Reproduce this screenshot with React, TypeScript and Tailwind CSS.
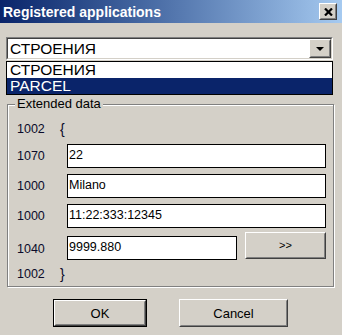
import type { ReactNode } from 'react';

function Raised({ className, children }: { className: string; children?: ReactNode }) {
  return (
    <div
      className={`border border-t-white border-l-white border-r-[#404040] border-b-[#404040] bg-[#d4d0c8] ${className}`}
    >
      <div className="flex h-full w-full items-center justify-center border border-t-[#d4d0c8] border-l-[#d4d0c8] border-r-[#808080] border-b-[#808080]">
        {children}
      </div>
    </div>
  );
}

function Field({ value, className }: { value: string; className: string }) {
  return (
    <div
      className={`flex h-[24px] items-center border border-black bg-white pl-[1px] pb-[2px] text-[12.5px] leading-none ${className}`}
    >
      {value}
    </div>
  );
}

function Label({ code, className = 'w-[50px]' }: { code: string; className?: string }) {
  return <span className={`shrink-0 text-[12.5px] leading-none text-[#0b0b2a] ${className}`}>{code}</span>;
}

export default function App() {
  return (
    <div className="relative h-[335px] w-[342px] overflow-hidden bg-[#d4d0c8] font-['Liberation_Sans',Arial,sans-serif] text-black">
      {/* title bar */}
      <div className="flex h-[23px] items-center justify-between bg-linear-to-r from-[#0a246a] to-[#a6caf0] pl-[3px] pr-[5px]">
        <span className="text-[14px] leading-none font-bold text-white">Registered applications</span>
        <Raised className="h-[17px] w-[18px]">
          <svg width="9" height="8" viewBox="0 0 9 8">
            <path d="M1 0.5 L8 7.5 M8 0.5 L1 7.5" stroke="black" strokeWidth="2.2" />
          </svg>
        </Raised>
      </div>

      {/* combo box */}
      <div className="mt-[14px] ml-[6px] h-[23px] w-[327px] border border-t-[#808080] border-l-[#808080] border-r-white border-b-white">
        <div className="flex h-full w-full items-center border border-t-[#404040] border-l-[#404040] border-r-[#d4d0c8] border-b-[#d4d0c8] bg-white">
          <span className="flex-1 pl-[2px] text-[15.5px] leading-none">СТРОЕНИЯ</span>
          <Raised className="h-full w-[22px]">
            <svg width="8" height="4" viewBox="0 0 8 4">
              <path d="M0 0 H8 L4 4 Z" fill="black" />
            </svg>
          </Raised>
        </div>
      </div>

      {/* group box */}
      <div className="relative mt-[44px] ml-[7px] h-[183px] w-[327px] border border-[#808080] shadow-[inset_1px_1px_0_#fff,1px_1px_0_#fff]">
        <span className="absolute -top-[8px] left-[7px] bg-[#d4d0c8] px-[2px] text-[13px] leading-[14px]">
          Extended data
        </span>

        <div className="flex flex-col pt-[14px] pl-[9px]">
          <div className="flex h-[20px] items-center">
            <Label code="1002" className="w-[43px]" />
            <span className="text-[14px] leading-none text-[#0b0b2a]">{'{'}</span>
          </div>

          <div className="mt-[5px] flex h-[24px] items-center">
            <Label code="1070" />
            <Field value="22" className="w-[259px]" />
          </div>
          <div className="mt-[6px] flex h-[24px] items-center">
            <Label code="1000" />
            <Field value="Milano" className="w-[259px]" />
          </div>
          <div className="mt-[6px] flex h-[24px] items-center">
            <Label code="1000" />
            <Field value="11:22:333:12345" className="w-[259px]" />
          </div>

          <div className="mt-[4px] flex h-[28px] items-center">
            <Label code="1040" className="w-[50px] self-end pb-[5px]" />
            <Field value="9999.880" className="w-[170px] self-end" />
            <Raised className="ml-[8px] h-[27px] w-[81px] self-start">
              <span className="text-[11px] leading-none">&gt;&gt;</span>
            </Raised>
          </div>

          <div className="mt-[4px] flex h-[20px] items-center">
            <Label code="1002" className="w-[43px]" />
            <span className="text-[14px] leading-none text-[#0b0b2a]">{'}'}</span>
          </div>
        </div>
      </div>

      {/* buttons */}
      <div className="mt-[12px] flex pl-[53px]">
        <div className="h-[28px] w-[94px] border border-black">
          <Raised className="h-full w-full">
            <span className="text-[13px] leading-none">OK</span>
          </Raised>
        </div>
        <Raised className="ml-[32px] h-[28px] w-[109px]">
          <span className="text-[13px] leading-none">Cancel</span>
        </Raised>
      </div>

      {/* opened dropdown list */}
      <div className="absolute top-[61px] left-[6px] w-[327px] border border-black bg-white">
        <div className="flex h-[16px] items-center pl-[3px] text-[15.5px] leading-none">СТРОЕНИЯ</div>
        <div className="flex h-[16px] items-center bg-[#0a246a] pl-[3px] text-[15.5px] leading-none text-white">
          PARCEL
        </div>
      </div>
    </div>
  );
}
